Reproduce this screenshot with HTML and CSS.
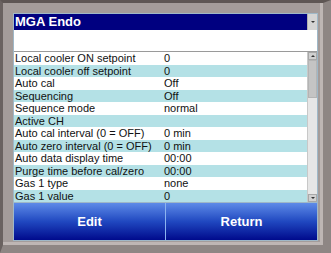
FILE: index.html
```html
<!DOCTYPE html>
<html lang="en">

<head>
    <title>MGA Endo</title>
    <link rel="stylesheet" href="styles.css">
</head>

<body>
    <div class="bezel">
        <div class="frame">
            <div class="panel">
                <div class="title">
                    <span class="title-text">MGA Endo</span>
                    <span class="drop"><span class="arrow-down"></span></span>
                </div>
                <div class="blank"></div>
                <div class="list">
                    <div class="rows">
                        <div class="row"><span class="label">Local cooler ON setpoint</span><span class="value">0</span></div>
                        <div class="row alt"><span class="label">Local cooler off setpoint</span><span class="value">0</span></div>
                        <div class="row"><span class="label">Auto cal</span><span class="value">Off</span></div>
                        <div class="row alt"><span class="label">Sequencing</span><span class="value">Off</span></div>
                        <div class="row"><span class="label">Sequence mode</span><span class="value">normal</span></div>
                        <div class="row alt"><span class="label">Active CH</span><span class="value"></span></div>
                        <div class="row"><span class="label">Auto cal interval (0 = OFF)</span><span class="value">0 min</span></div>
                        <div class="row alt"><span class="label">Auto zero interval (0 = OFF)</span><span class="value">0 min</span></div>
                        <div class="row"><span class="label">Auto data display time</span><span class="value">00:00</span></div>
                        <div class="row alt"><span class="label">Purge time before cal/zero</span><span class="value">00:00</span></div>
                        <div class="row"><span class="label">Gas 1 type</span><span class="value">none</span></div>
                        <div class="row alt"><span class="label">Gas 1 value</span><span class="value">0</span></div>
                    </div>
                    <div class="scroll">
                        <div class="sbtn"><span class="arrow-up"></span></div>
                        <div class="thumb"></div>
                        <div class="track"></div>
                        <div class="sbtn"><span class="arrow-down"></span></div>
                    </div>
                </div>
                <div class="buttons">
                    <button class="btn">Edit</button>
                    <button class="btn">Return</button>
                </div>
            </div>
        </div>
    </div>
</body>

</html>
```

FILE: styles.css
```css
body {
    margin: 0;
    background-color: #a39b99;
    font-family: "Liberation Sans", Arial, sans-serif;
}

.bezel {
    width: 331px;
    height: 253px;
    box-sizing: border-box;
    border-style: solid;
    border-width: 3px 8px 8px 3px;
    border-color: #5e5654 #8e8684 #8e8684 #6a6260;
}

.frame {
    height: 100%;
    box-sizing: border-box;
    border-style: solid;
    border-width: 0 3px 3px 0;
    border-color: #beb6b4;
    background-color: #a49c9a;
    padding: 10px 2px 1px 10px;
}

.panel {
    height: 100%;
    box-sizing: border-box;
    border: 1px solid #9fb8c8;
    background-color: #fff;
    display: flex;
    flex-direction: column;
}

.title {
    height: 16px;
    display: flex;
    background-color: #000080;
}

.title-text {
    flex: 1;
    color: #fff;
    font-weight: bold;
    font-size: 13px;
    line-height: 16px;
    padding-left: 1px;
}

.drop {
    width: 9px;
    background-color: #d4d4d4;
    border-left: 1px solid #b0b0b0;
    display: flex;
    align-items: center;
    justify-content: center;
}

.arrow-down {
    border-left: 2px solid transparent;
    border-right: 2px solid transparent;
    border-top: 2px solid #333;
}

.arrow-up {
    border-left: 2px solid transparent;
    border-right: 2px solid transparent;
    border-bottom: 2px solid #333;
}

.blank {
    height: 21px;
    border-bottom: 1px solid #9a9a9a;
}

.list {
    height: 150px;
    display: flex;
}

.rows {
    flex: 1;
}

.row {
    height: 12.5px;
    display: flex;
    font-size: 11px;
    line-height: 12.5px;
    color: #111;
}

.row.alt {
    background-color: #b4e1e6;
}

.label {
    width: 149px;
    padding-left: 1px;
    white-space: nowrap;
}

.scroll {
    width: 9px;
    display: flex;
    flex-direction: column;
    background-color: #e6e6e6;
    border-left: 1px solid #c8c8c8;
}

.sbtn {
    height: 6px;
    background-color: #d0d0d0;
    border: 1px solid #a8a8a8;
    display: flex;
    align-items: center;
    justify-content: center;
}

.thumb {
    height: 36px;
    background-color: #c4c4c4;
    border: 1px solid #b4b4b4;
}

.track {
    flex: 1;
}

.buttons {
    flex: 1;
    display: flex;
    border-top: 1px solid #9fb8c8;
}

.btn {
    flex: 1;
    margin: 0;
    border: none;
    border-right: 1px solid #8cb4f0;
    background: linear-gradient(#5e8be8, #2048c0 50%, #000a8c);
    color: #fff;
    font-family: "Liberation Sans", Arial, sans-serif;
    font-weight: bold;
    font-size: 13px;
}

.btn:last-child {
    border-right: none;
}
```
